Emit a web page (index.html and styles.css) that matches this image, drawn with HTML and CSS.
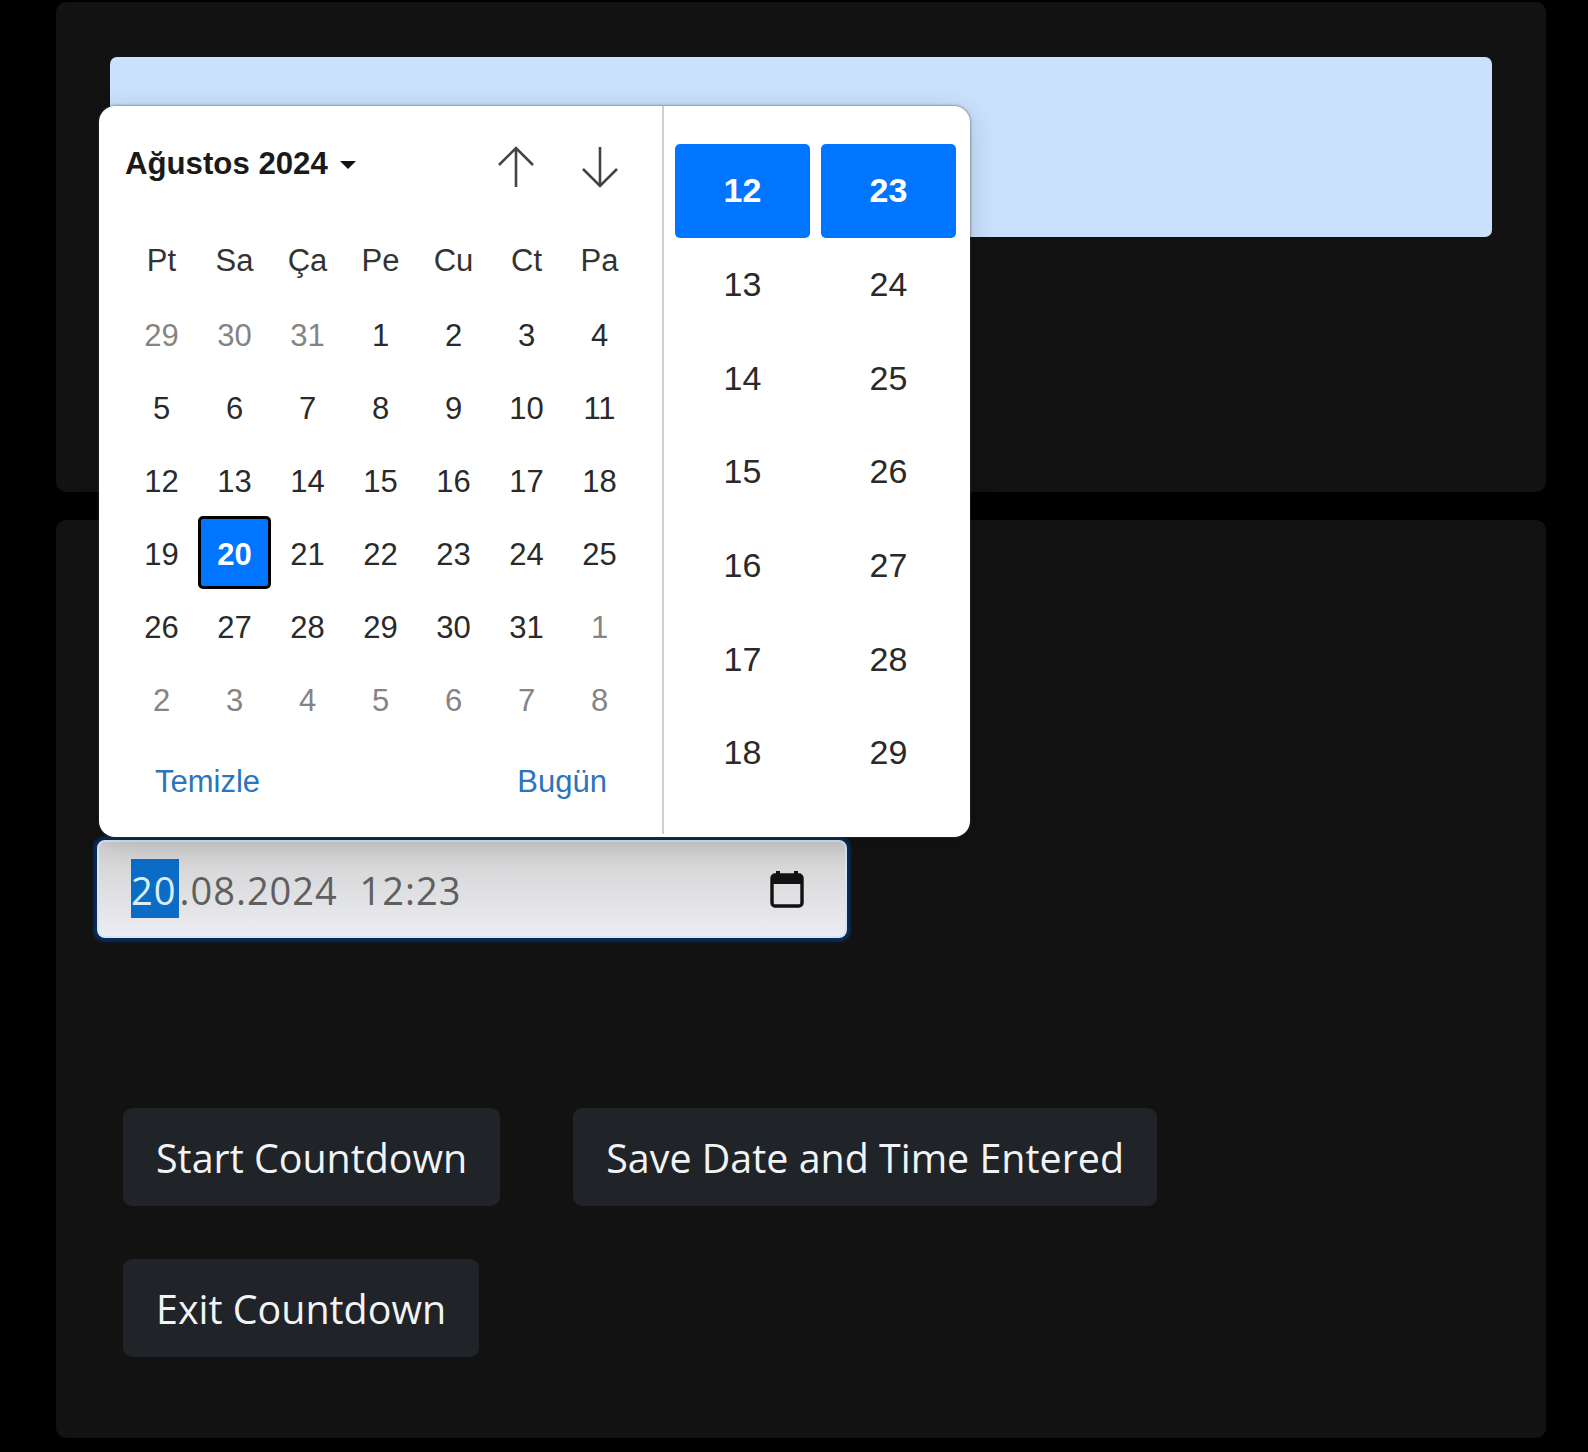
FILE: index.html
```html
<!DOCTYPE html>
<html lang="tr">
<head>
<meta charset="utf-8">
<title>Countdown</title>
<link rel="stylesheet" href="styles.css">
</head>
<body>
<main class="page">
  <section class="card card-top">
    <div class="alert"></div>
  </section>
  <section class="card card-main">
    <div class="field">
      <span class="field-text"><span class="selected">20</span>.08.2024&nbsp;&nbsp;12:23</span>
      <svg class="cal-icon" viewBox="0 0 34 38" aria-hidden="true">
        <path d="M8 1v6M26 1v6" stroke="#111" stroke-width="4"/>
        <rect x="2" y="5" width="30" height="31" rx="3" fill="none" stroke="#111" stroke-width="3.4"/>
        <rect x="2" y="5" width="30" height="9" fill="#111"/>
      </svg>
    </div>
    <div class="actions">
      <button class="btn">Start Countdown</button>
      <button class="btn">Save Date and Time Entered</button>
      <button class="btn">Exit Countdown</button>
    </div>
  </section>
</main>

<div class="picker">
  <div class="cal">
    <div class="cal-head">
      <span class="month">Ağustos 2024</span>
      <span class="caret"></span>
      <span class="nav">
        <svg class="arrow" viewBox="0 0 40 44" aria-hidden="true"><path d="M20 42V3M3 20 20 3l17 17" fill="none" stroke="#444" stroke-width="2.6"/></svg>
        <svg class="arrow" viewBox="0 0 40 44" aria-hidden="true"><path d="M20 2v39M3 24l17 17 17-17" fill="none" stroke="#444" stroke-width="2.6"/></svg>
      </span>
    </div>
    <div class="days">
      <span class="wd">Pt</span><span class="wd">Sa</span><span class="wd">Ça</span><span class="wd">Pe</span><span class="wd">Cu</span><span class="wd">Ct</span><span class="wd">Pa</span>
      <span class="day off">29</span><span class="day off">30</span><span class="day off">31</span><span class="day">1</span><span class="day">2</span><span class="day">3</span><span class="day">4</span>
      <span class="day">5</span><span class="day">6</span><span class="day">7</span><span class="day">8</span><span class="day">9</span><span class="day">10</span><span class="day">11</span>
      <span class="day">12</span><span class="day">13</span><span class="day">14</span><span class="day">15</span><span class="day">16</span><span class="day">17</span><span class="day">18</span>
      <span class="day">19</span><span class="day today">20</span><span class="day">21</span><span class="day">22</span><span class="day">23</span><span class="day">24</span><span class="day">25</span>
      <span class="day">26</span><span class="day">27</span><span class="day">28</span><span class="day">29</span><span class="day">30</span><span class="day">31</span><span class="day off">1</span>
      <span class="day off">2</span><span class="day off">3</span><span class="day off">4</span><span class="day off">5</span><span class="day off">6</span><span class="day off">7</span><span class="day off">8</span>
    </div>
    <div class="cal-foot">
      <span class="link">Temizle</span>
      <span class="link">Bugün</span>
    </div>
  </div>
  <div class="time">
    <span class="tm on">12</span><span class="tm on">23</span>
    <span class="tm">13</span><span class="tm">24</span>
    <span class="tm">14</span><span class="tm">25</span>
    <span class="tm">15</span><span class="tm">26</span>
    <span class="tm">16</span><span class="tm">27</span>
    <span class="tm">17</span><span class="tm">28</span>
    <span class="tm">18</span><span class="tm">29</span>
  </div>
</div>
</body>
</html>
```
FILE: styles.css
```css
* { box-sizing: border-box; }
html, body { margin: 0; background: #000; }
body { height: 1452px; overflow: hidden; position: relative; }

.page {
  display: flex;
  flex-direction: column;
  gap: 28px;
  padding: 2px 42px 0 56px;
}
.card { background: #121212; border-radius: 10px; }
.card-top { height: 490px; padding: 55px 54px; }
.card-main { height: 918px; padding: 320px 0 0 41px; }

.alert { height: 180px; background: #c9e1fd; border-radius: 7px; }

.field {
  width: 750px;
  height: 98px;
  display: flex;
  align-items: center;
  justify-content: space-between;
  padding: 0 41px 0 32px;
  border: 2px solid #d5e5fb;
  border-radius: 8px;
  background: linear-gradient(#d0d0d0, #ecedf2);
  box-shadow: 0 0 2px 4px #0b2a52;
}
.field-text {
  font: 38px/59px "Open Sans", sans-serif;
  letter-spacing: 1px;
  color: #5f5f5f;
  white-space: nowrap;
}
.selected {
  display: inline-block;
  padding: 3px 3px 0 0;
  line-height: 56px;
  background: #0b6cc6;
  color: #dcecf8;
}
.cal-icon { width: 34px; height: 38px; display: block; }

.actions {
  display: flex;
  flex-wrap: wrap;
  gap: 53px 73px;
  width: 1100px;
  margin: 170px 0 0 26px;
}
.btn {
  height: 98px;
  padding: 4px 33px 0;
  border: 0;
  border-radius: 9px;
  background: #202328;
  color: #f2f3f4;
  font: 39.4px/1 "Open Sans", sans-serif;
}

.picker {
  position: absolute;
  left: 99px;
  top: 106px;
  width: 871px;
  height: 731px;
  display: flex;
  background: #fff;
  border-radius: 16px;
  box-shadow: 0 0 3px rgba(60, 60, 60, .8), 0 6px 28px rgba(0, 0, 0, .16);
  font-family: "Liberation Sans", Arial, sans-serif;
  color: #2a2a2a;
}
.cal {
  width: 565px;
  height: 728px;
  border-right: 2px solid #cfcfcf;
  padding: 0 26px;
}
.cal-head {
  height: 118px;
  display: flex;
  align-items: center;
}
.month { font-size: 31.2px; font-weight: 700; color: #1a1a1a; margin-bottom: 2px; }
.caret {
  width: 0;
  height: 0;
  margin: 0 0 0 12px;
  border-style: solid;
  border-width: 8px 8px 0;
  border-color: #111 transparent transparent;
}
.nav { margin-left: auto; margin-right: 16px; display: flex; gap: 44px; padding-top: 4px; }
.arrow { width: 40px; height: 44px; display: block; }

.days {
  display: grid;
  grid-template-columns: repeat(7, 73px);
  grid-auto-rows: 73px;
  margin-right: -26px;
}
.wd, .day {
  display: flex;
  align-items: center;
  justify-content: center;
  font-size: 31px;
}
.day { padding-top: 4px; }
.wd { color: #333; }
.off { color: #848484; }
.today {
  background: #0075ff;
  color: #fff;
  font-weight: 700;
  border: 3px solid #000;
  border-radius: 5px;
}
.cal-foot {
  display: flex;
  justify-content: space-between;
  padding: 29px 29px 0 30px;
}
.link { font-size: 31px; color: #2a75bb; }

.time {
  flex: 1;
  display: grid;
  grid-template-columns: 135px 135px;
  grid-auto-rows: 93.7px;
  column-gap: 11px;
  align-content: start;
  padding: 38px 0 0 11px;
}
.tm {
  display: flex;
  align-items: center;
  justify-content: center;
  font-size: 34px;
  color: #2a2a2a;
  border-radius: 5px;
}
.on { background: #0075ff; color: #fff; font-weight: 700; }
```
